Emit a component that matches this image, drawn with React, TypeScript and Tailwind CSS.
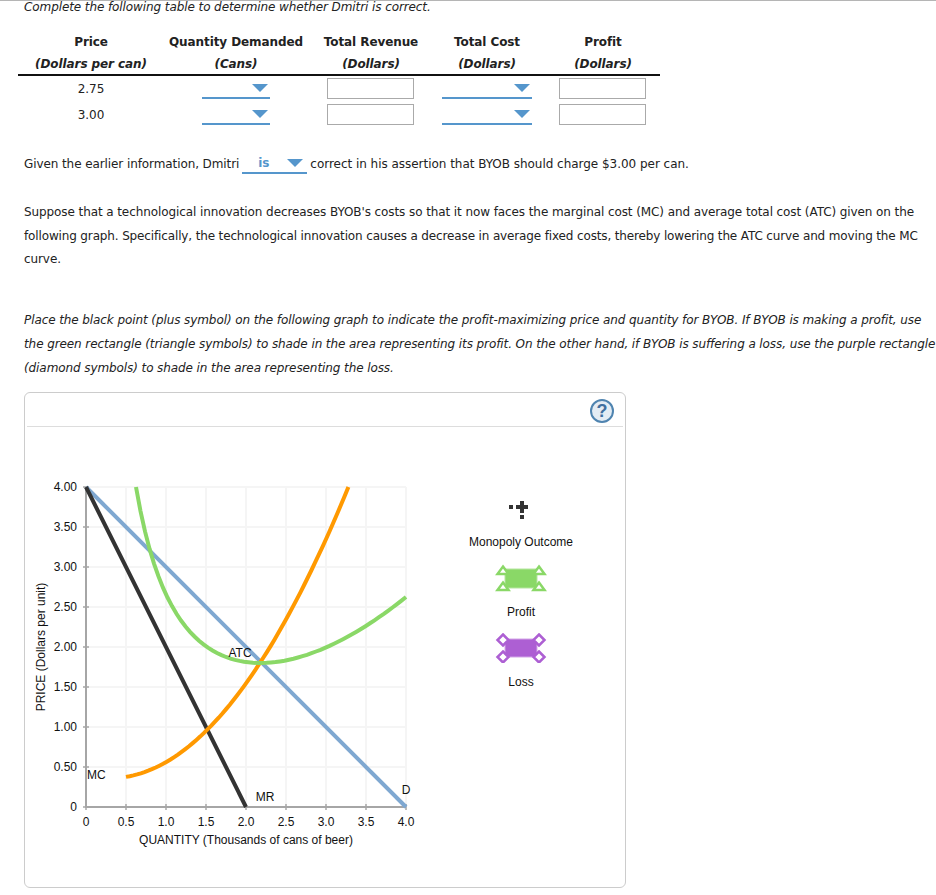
const xTicks = ['0', '0.5', '1.0', '1.5', '2.0', '2.5', '3.0', '3.5', '4.0']
const yTicks = ['0', '0.50', '1.00', '1.50', '2.00', '2.50', '3.00', '3.50', '4.00']

// graph coords: 80px per unit, origin at 86,807
const toX = (q: number) => 86 + q * 80
const toY = (p: number) => 807 - p * 80

function curve(from: number, to: number, fn: (q: number) => number) {
  const pts: string[] = []
  for (let i = 0; i <= 60; i++) {
    const q = from + ((to - from) * i) / 60
    pts.push(`${toX(q).toFixed(1)},${toY(fn(q)).toFixed(1)}`)
  }
  return pts.join(' ')
}

const mcPoints = curve(0.5, 3.28, q => 0.36 + 0.41 * (q - 0.3) * (q - 0.3))
const atcPoints = curve(0.625, 4, q => 2.3253 / q + 0.2698 - 0.0638 * q + 0.1268 * q * q)

function Arrow() {
  return (
    <svg width="16" height="8" viewBox="0 0 16 8" className="shrink-0">
      <polygon points="0,0 16,0 8,8" fill="#5596cc" />
    </svg>
  )
}

function Dropdown({ width }: { width: string }) {
  return (
    <div className={`${width} h-[19px] mx-auto flex items-center justify-end pr-[2px] border-b-2 border-[#5596cc]`}>
      <Arrow />
    </div>
  )
}

function Box() {
  return <div className="w-[87px] h-[21px] ml-[19px] self-start mt-[2px] border border-[#aaaaaa] bg-white" />
}

function Chart() {
  return (
    <svg width="420" height="460" viewBox="25 427 420 460" className="shrink-0 tracking-normal font-['Liberation_Sans',Arial,sans-serif]">
      {xTicks.map((t, i) => (
        <line key={t} x1={86 + i * 40} y1="487" x2={86 + i * 40} y2="807" stroke="#f5f5f5" strokeWidth="2" />
      ))}
      {yTicks.map((t, i) => (
        <line key={t} x1="86" y1={807 - i * 40} x2="406" y2={807 - i * 40} stroke="#f5f5f5" strokeWidth="2" />
      ))}
      <line x1="86" y1="487" x2="86" y2="808" stroke="#a6a6a6" strokeWidth="2" />
      <line x1="85" y1="807" x2="406" y2="807" stroke="#a6a6a6" strokeWidth="2" />
      {xTicks.map((t, i) => (
        <line key={t} x1={86 + i * 40} y1="804" x2={86 + i * 40} y2="810" stroke="#a6a6a6" strokeWidth="1.5" />
      ))}
      {yTicks.map((t, i) => (
        <line key={t} x1="83" y1={807 - i * 40} x2="89" y2={807 - i * 40} stroke="#a6a6a6" strokeWidth="1.5" />
      ))}

      <line x1="86" y1="487" x2="406" y2="807" stroke="#7fa8d1" strokeWidth="4" />
      <line x1="86" y1="487" x2="246" y2="807" stroke="#333333" strokeWidth="4" />
      <polyline points={mcPoints} fill="none" stroke="#ff9900" strokeWidth="4" />
      <polyline points={atcPoints} fill="none" stroke="#8ad867" strokeWidth="4" />

      {yTicks.map((t, i) => (
        <text key={t} x="77" y={811 - i * 40} textAnchor="end" fontSize="12" fill="#111">{t}</text>
      ))}
      {xTicks.map((t, i) => (
        <text key={t} x={86 + i * 40} y="826" textAnchor="middle" fontSize="12" fill="#111">{t}</text>
      ))}
      <text x="246" y="844" textAnchor="middle" fontSize="12" fill="#111">QUANTITY (Thousands of cans of beer)</text>
      <text transform="translate(45 647) rotate(-90)" textAnchor="middle" fontSize="12" fill="#111">PRICE (Dollars per unit)</text>
      <text x="240" y="657" textAnchor="middle" fontSize="12" fill="#111">ATC</text>
      <text x="87" y="779" fontSize="12" fill="#111">MC</text>
      <text x="265" y="801" textAnchor="middle" fontSize="12" fill="#111">MR</text>
      <text x="406" y="794" textAnchor="middle" fontSize="12" fill="#111">D</text>
    </svg>
  )
}

function Legend() {
  return (
    <div className="w-[152px] pt-[74px] flex flex-col items-center text-xs tracking-normal text-[#111] font-['Liberation_Sans',Arial,sans-serif]">
      <svg width="24" height="18" viewBox="508 501 24 18" className="block">
        <rect x="519" y="501" width="4" height="12" fill="#333" />
        <rect x="515" y="505" width="12" height="4" fill="#333" />
        <rect x="508" y="505" width="4" height="4" fill="#333" />
        <rect x="519" y="515" width="4" height="4" fill="#333" />
      </svg>
      <div className="mt-[15px] h-[16px] leading-[16px]">Monopoly Outcome</div>
      <svg width="54" height="30" viewBox="494 562 54 30" className="block mt-[13px]">
        <rect x="505" y="568" width="32" height="19" fill="#8ad867" stroke="#b5e6a0" strokeWidth="1" />
        <polygon points="503,565.5 508.5,573 497.5,573" fill="#fff" stroke="#8ad867" strokeWidth="2.5" />
        <polygon points="539,565.5 544.5,573 533.5,573" fill="#fff" stroke="#8ad867" strokeWidth="2.5" />
        <polygon points="503,581.5 508.5,589 497.5,589" fill="#fff" stroke="#8ad867" strokeWidth="2.5" />
        <polygon points="539,581.5 544.5,589 533.5,589" fill="#fff" stroke="#8ad867" strokeWidth="2.5" />
      </svg>
      <div className="mt-[11px] h-[16px] leading-[16px]">Profit</div>
      <svg width="54" height="30" viewBox="494 632 54 30" className="block mt-[13px]">
        <rect x="505" y="638" width="32" height="18" fill="#ad5fd3" stroke="#d3a6e8" strokeWidth="1" />
        <polygon points="503,633.5 508.5,639 503,644.5 497.5,639" fill="#fff" stroke="#ad5fd3" strokeWidth="2.5" />
        <polygon points="539,633.5 544.5,639 539,644.5 533.5,639" fill="#fff" stroke="#ad5fd3" strokeWidth="2.5" />
        <polygon points="503,650.5 508.5,656 503,661.5 497.5,656" fill="#fff" stroke="#ad5fd3" strokeWidth="2.5" />
        <polygon points="539,650.5 544.5,656 539,661.5 533.5,656" fill="#fff" stroke="#ad5fd3" strokeWidth="2.5" />
      </svg>
      <div className="mt-[11px] h-[16px] leading-[16px]">Loss</div>
    </div>
  )
}

export default function App() {
  return (
    <div className="w-[936px] h-[895px] overflow-hidden bg-white border-t border-[#b5b5b5] text-xs tracking-[-0.09px] text-[#222] font-['DejaVu_Sans',Verdana,sans-serif]">
      <div className="pl-6 -mt-[6px] leading-6 italic h-6">Complete the following table to determine whether Dmitri is correct.</div>

      <div className="ml-[18px] mt-[12px] w-[642px]">
        <div className="grid grid-cols-[146px_144px_126px_106px_120px] text-center border-b-2 border-[#111]">
          <div className="font-bold h-[22px] leading-[22px]">Price</div>
          <div className="font-bold h-[22px] leading-[22px] whitespace-nowrap">Quantity Demanded</div>
          <div className="font-bold h-[22px] leading-[22px] whitespace-nowrap">Total Revenue</div>
          <div className="font-bold h-[22px] leading-[22px]">Total Cost</div>
          <div className="font-bold h-[22px] leading-[22px] pl-[6px]">Profit</div>
          <div className="font-bold italic h-[21px] leading-[22px] whitespace-nowrap">(Dollars per can)</div>
          <div className="font-bold italic h-[21px] leading-[22px]">(Cans)</div>
          <div className="font-bold italic h-[21px] leading-[22px]">(Dollars)</div>
          <div className="font-bold italic h-[21px] leading-[22px]">(Dollars)</div>
          <div className="font-bold italic h-[21px] leading-[22px] pl-[6px]">(Dollars)</div>
        </div>
        <div className="grid grid-cols-[146px_144px_126px_106px_120px] auto-rows-[26px] items-center text-center">
          <div>2.75</div>
          <Dropdown width="w-[68px]" />
          <Box />
          <Dropdown width="w-[90px]" />
          <Box />
          <div>3.00</div>
          <Dropdown width="w-[68px]" />
          <Box />
          <Dropdown width="w-[90px]" />
          <Box />
        </div>
      </div>

      <div className="pl-6 mt-[24px] h-6 leading-6 flex items-center whitespace-nowrap">
        <span>Given the earlier information, Dmitri</span>
        <div className="ml-[3px] w-[65px] h-[20px] flex items-center border-b-2 border-[#5596cc]">
          <span className="ml-[16px] font-bold text-[#5596cc]">is</span>
          <span className="ml-auto mr-[4px]"><Arrow /></span>
        </div>
        <span className="ml-[3px] tracking-[-0.03px]">correct in his assertion that BYOB should charge $3.00 per can.</span>
      </div>

      <p className="pl-6 mt-[25px] leading-[23.7px] whitespace-nowrap">
        Suppose that a technological innovation decreases BYOB's costs so that it now faces the marginal cost (MC) and average total cost (ATC) given on the<br />
        <span className="tracking-[-0.14px]">following graph. Specifically, the technological innovation causes a decrease in average fixed costs, thereby lowering the ATC curve and moving the MC</span><br />
        curve.
      </p>

      <p className="pl-6 mt-[36px] leading-6 italic whitespace-nowrap">
        Place the black point (plus symbol) on the following graph to indicate the profit-maximizing price and quantity for BYOB. If BYOB is making a profit, use<br />
        the green rectangle (triangle symbols) to shade in the area representing its profit. On the other hand, if BYOB is suffering a loss, use the purple rectangle<br />
        (diamond symbols) to shade in the area representing the loss.
      </p>

      <div className="ml-6 mt-[12px] w-[602px] h-[496px] border border-[#cccccc] rounded-md flex flex-col">
        <div className="mx-[2px] h-[34px] border-b border-[#dddddd] flex items-center justify-end pr-[9px]">
          <div className="w-[24px] h-[24px] mt-[3px] rounded-full border-2 border-[#4f84b0] bg-[#e3ecf4] flex items-center justify-center text-[18px] tracking-normal leading-none font-bold text-[#3f6f9f] font-['Liberation_Sans',Arial,sans-serif]">?</div>
        </div>
        <div className="flex">
          <Chart />
          <Legend />
        </div>
      </div>
    </div>
  )
}
